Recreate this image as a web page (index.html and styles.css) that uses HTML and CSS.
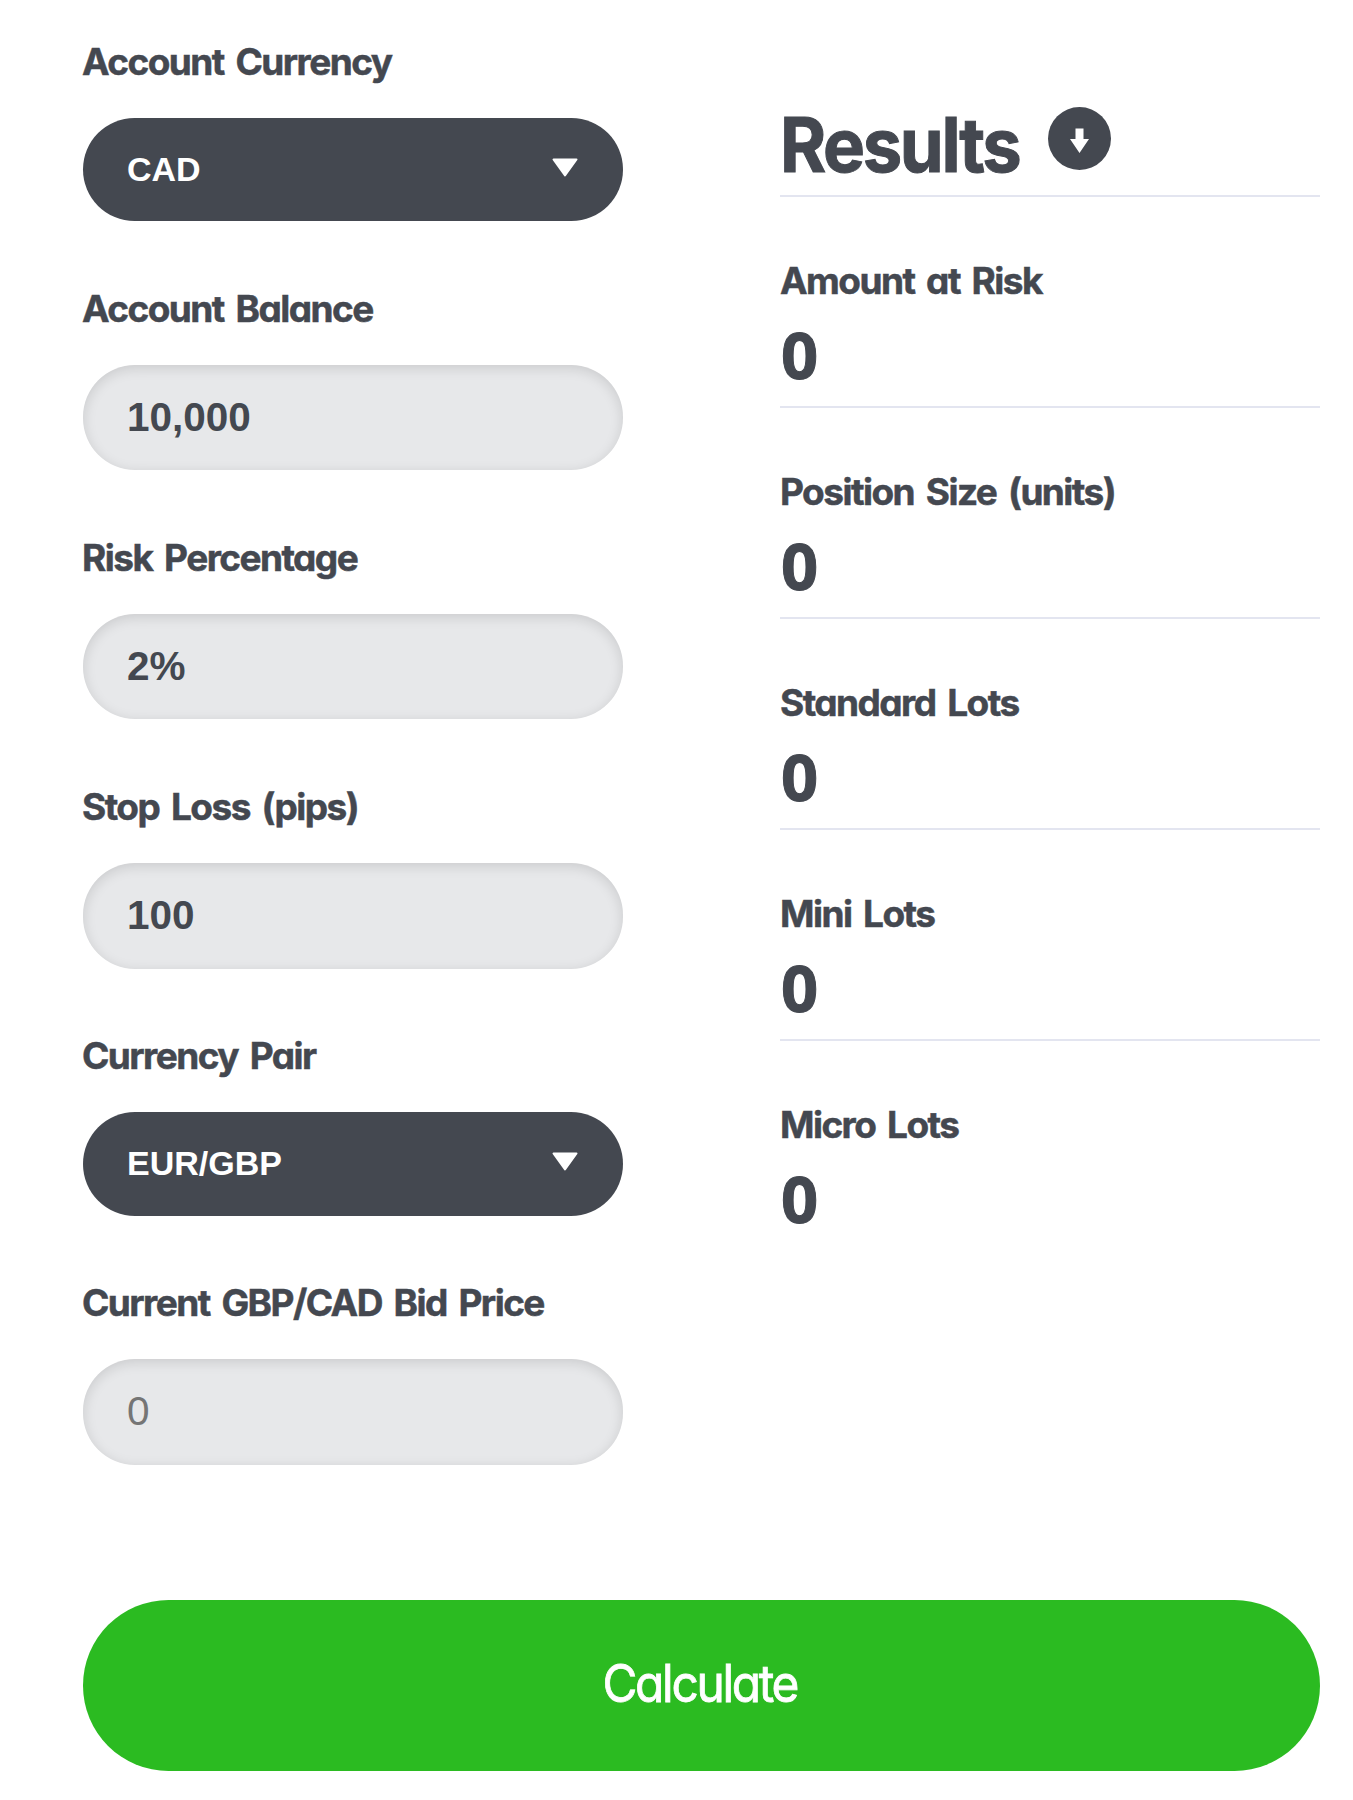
FILE: index.html
```
<!DOCTYPE html>
<html lang="en">
<head>
  <meta charset="UTF-8" />
  <meta name="viewport" content="width=device-width, initial-scale=1.0"/>
  <title>Position Size Calculator</title>
  <link rel="stylesheet" href="styles.css">
</head>
<body>

  <form class="calculator" onsubmit="return false">
    <div class="columns">

      <div class="fields">
        <div class="field">
          <label for="currency">Account Currency</label>
          <div class="select">
            <select id="currency"><option>CAD</option></select>
            <svg class="caret" viewBox="0 0 26 19"><path d="M1.5 1.5h23L13 17.5z"/></svg>
          </div>
        </div>

        <div class="field">
          <label for="balance">Account Balance</label>
          <input id="balance" type="text" value="10,000">
        </div>

        <div class="field">
          <label for="risk">Risk Percentage</label>
          <input id="risk" type="text" value="2%">
        </div>

        <div class="field">
          <label for="stop">Stop Loss (pips)</label>
          <input id="stop" type="text" value="100">
        </div>

        <div class="field">
          <label for="pair">Currency Pair</label>
          <div class="select">
            <select id="pair"><option>EUR/GBP</option></select>
            <svg class="caret" viewBox="0 0 26 19"><path d="M1.5 1.5h23L13 17.5z"/></svg>
          </div>
        </div>

        <div class="field">
          <label for="price">Current GBP/CAD Bid Price</label>
          <input id="price" type="text" placeholder="0">
        </div>
      </div>

      <div class="results">
        <div class="results-head">
          <h2>Results</h2>
          <svg class="down" viewBox="0 0 63 63">
            <circle cx="31.5" cy="31.5" r="31.5"/>
            <path d="M27.5 21.5h8V32H41l-9.5 14L22 32h5.5z"/>
          </svg>
        </div>

        <div class="result">
          <h3>Amount at Risk</h3>
          <div class="value">0</div>
        </div>
        <div class="result">
          <h3>Position Size (units)</h3>
          <div class="value">0</div>
        </div>
        <div class="result">
          <h3>Standard Lots</h3>
          <div class="value">0</div>
        </div>
        <div class="result">
          <h3>Mini Lots</h3>
          <div class="value">0</div>
        </div>
        <div class="result">
          <h3>Micro Lots</h3>
          <div class="value">0</div>
        </div>
      </div>

    </div>

    <button class="calculate" type="submit"><span>Calculate</span></button>
  </form>

</body>
</html>
```

FILE: styles.css
```
* {
  box-sizing: border-box;
}

body {
  margin: 0;
  background: #fff;
  color: #444850;
  font-family: Inter, "Liberation Sans", sans-serif;
  font-feature-settings: "cv11";
}

.calculator {
  width: 1237px;
  margin-left: 83px;
  padding-top: 37.8px;
}

.columns {
  display: flex;
  justify-content: space-between;
}

.fields,
.results {
  width: 540px;
}

.field {
  margin-bottom: 63.5px;
}

label,
h3 {
  display: block;
  height: 48px;
  margin: 0;
  font-size: 37px;
  font-weight: 700;
  line-height: 48px;
  letter-spacing: -1.55px;
  word-spacing: 4.5px;
  white-space: nowrap;
  -webkit-text-stroke: 0.5px #444850;
}

label {
  margin: 0 0 32px -1px;
}

input,
select {
  display: block;
  width: 100%;
  padding: 0 44px;
  border: none;
  border-radius: 52px;
  outline: none;
  font-family: "Liberation Sans", Arial, sans-serif;
  font-weight: 700;
}

input {
  height: 105.6px;
  padding-bottom: 1px;
  background: #e7e8ea;
  color: #444850;
  font-size: 40.5px;
  box-shadow: inset 0 3px 13px rgba(0, 0, 0, 0.13);
}

input::placeholder {
  color: #757575;
  font-weight: 400;
}

.select {
  position: relative;
}

select {
  appearance: none;
  height: 103.5px;
  padding-bottom: 2px;
  background: #444850;
  color: #fff;
  font-size: 34px;
}

.caret {
  position: absolute;
  top: 40px;
  right: 45px;
  width: 26px;
  height: 19px;
  fill: #fff;
  stroke: #fff;
  stroke-width: 2;
  stroke-linejoin: round;
  pointer-events: none;
}

.results-head {
  display: flex;
  height: 159px;
  border-bottom: 2px solid #e3e5f0;
}

h2 {
  width: 268px;
  margin: 62px 0 0 0;
  font-size: 75px;
  font-weight: 700;
  line-height: 90px;
  letter-spacing: -2.5px;
  transform: scaleX(0.94);
  transform-origin: left;
  -webkit-text-stroke: 1px #444850;
}

.down {
  width: 63px;
  height: 63px;
  margin-top: 69px;
  fill: #444850;
}

.down path {
  fill: #fff;
}

.result {
  height: 211px;
  padding-top: 60px;
  border-bottom: 2px solid #e3e5f0;
}

.result:last-child {
  border-bottom: none;
}

.value {
  margin: 4px 0 0 1px;
  font-family: "Open Sans", sans-serif;
  font-size: 65px;
  font-weight: 700;
  line-height: 90px;
  -webkit-text-stroke: 1px #444850;
}

.calculate {
  display: block;
  width: 100%;
  height: 171px;
  margin-top: 71.8px;
  padding: 0 9px 4px 6px;
  border: none;
  border-radius: 86px;
  background: #2bbb21;
  color: #fff;
  font-family: inherit;
  font-feature-settings: inherit;
  font-size: 52px;
  letter-spacing: -2.5px;
}

.calculate span {
  display: inline-block;
  transform: scaleX(0.92);
  -webkit-text-stroke: 0.8px #fff;
}
```
